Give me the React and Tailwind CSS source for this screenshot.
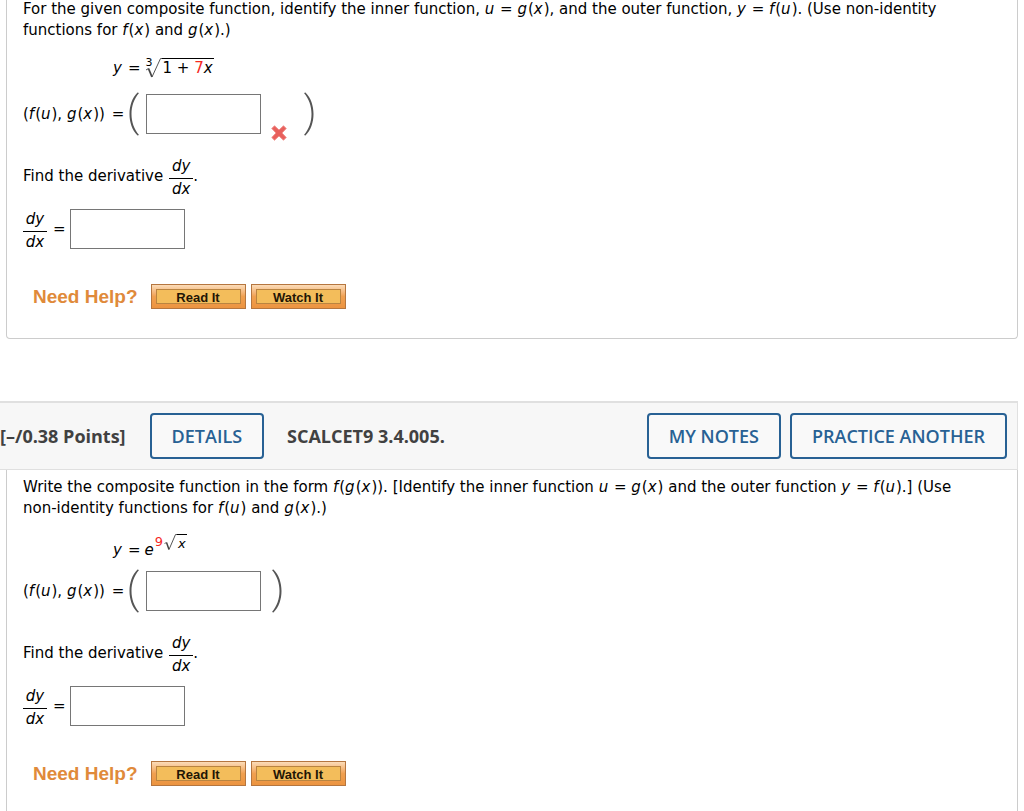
import React from "react";

const INPUT = "h-10 w-[115px] shrink-0 border border-[#767676] bg-white px-2 outline-none";

function Fraction() {
  return (
    <span className="flex w-6 shrink-0 flex-col items-center italic">
      <span className="leading-[21px]">dy</span>
      <span className="mt-px h-px w-full bg-black" />
      <span className="leading-[21px]">dx</span>
    </span>
  );
}

function Paren({ right }) {
  return (
    <svg viewBox="0 0 12 44" className="h-11 w-3 shrink-0" fill="none" aria-hidden="true">
      <path
        d={right ? "M1 1C6 7 8.500 14 8.500 22S6 37 1 43L2.500 43.500C8 38 10.500 30 10.500 22S8 6 2.500 0.500Z" : "M11 1C6 7 3.500 14 3.500 22S6 37 11 43L9.500 43.500C4 38 1.500 30 1.500 22S4 6 9.500 0.500Z"}
        fill="#555"
      />
    </svg>
  );
}

function WrongMark() {
  return (
    <svg viewBox="0 0 16 16" className="mt-[38px] h-4 w-4 shrink-0" role="img" aria-label="Incorrect">
      <path
        d="M3.500 0.800 8 5 12.500 0.800 15.200 3.500 11 8 15.200 12.500 12.500 15.200 8 11 3.500 15.200 0.800 12.500 5 8 0.800 3.500Z"
        fill="#e8605c"
        stroke="#f0908c"
        strokeWidth="1"
        strokeLinejoin="round"
      />
    </svg>
  );
}

function HelpButton({ children }) {
  return (
    <button
      type="button"
      className="h-[25px] w-[95px] border border-[#b5763f] bg-linear-to-b from-[#fbdcb8] via-[#f0a050] to-[#ec9440] p-1 font-['Liberation_Sans',Arial,sans-serif] text-[13px] font-bold text-[#1f1606]"
    >
      <span className="flex h-full items-center justify-center border border-[#b98440] bg-[#f3bd5b] pt-px leading-[15px]">
        {children}
      </span>
    </button>
  );
}

function Answers({ id, wrong }) {
  return (
    <>
      <div className="mt-2 flex h-11 items-center">
        <label htmlFor={id + "-pair"} className="mr-1 whitespace-nowrap">
          (<i>f</i>(<i>u</i>), <i>g</i>(<i>x</i>)) <span className="ml-0.5">=</span>
        </label>
        <Paren />
        <input id={id + "-pair"} type="text" className={INPUT + " ml-1.5"} />
        <span className="ml-2.5 flex h-11 items-center">
          {wrong && (
            <span className="mr-4 flex">
              <WrongMark />
            </span>
          )}
          <Paren right />
        </span>
      </div>
      <div className="mt-5 flex items-center">
        <span className="mr-1.5 pb-1">Find the derivative</span>
        <Fraction />
        <span className="pb-1">.</span>
      </div>
      <div className="mt-[9px] flex items-center">
        <label htmlFor={id + "-derivative"} className="mr-1 flex items-center gap-1.5">
          <Fraction />
          <span className="pb-1">=</span>
        </label>
        <input id={id + "-derivative"} type="text" className={INPUT + " mb-1"} />
      </div>
      <div className="mt-[31px] flex items-center pl-2.5">
        <strong className="mr-[13px] font-['Liberation_Sans',Arial,sans-serif] text-[19px] leading-6 text-[#e08a3a]">
          Need Help?
        </strong>
        <div className="flex gap-[5px]">
          <HelpButton>Read It</HelpButton>
          <HelpButton>Watch It</HelpButton>
        </div>
      </div>
    </>
  );
}

function HeaderButton({ children }) {
  return (
    <button
      type="button"
      className="h-[46px] rounded-[4px] border-2 border-[#286194] bg-[#f9f9f9] px-5 text-[18px] font-semibold whitespace-nowrap text-[#286194]"
    >
      {children}
    </button>
  );
}

export default function App() {
  return (
    <main className="overflow-hidden bg-white font-['DejaVu_Sans',Verdana,sans-serif] text-[15px] leading-[21px] text-black [&_i]:mr-px">
      <section className="mr-1.5 ml-1.5 rounded-b-[4px] border border-t-0 border-[#ccc] px-4 pb-[29px]">
        <p className="-mt-px">
          For the given composite function, identify the inner function, <i>u</i> = <i>g</i>(<i>x</i>), and the outer
          function, <i>y</i> = <i>f</i>(<i>u</i>). (Use non-identity functions for <i>f</i>(<i>x</i>) and <i>g</i>(
          <i>x</i>).)
        </p>
        <div className="mt-[11px] flex h-8 items-center pl-[90px]">
          <i>y</i>
          <span className="mx-[5px]">=</span>
          <span className="relative flex items-center">
            <sup className="absolute top-0 left-0 text-[11px] leading-[11px]">3</sup>
            <svg viewBox="0 0 17 22" className="h-[22px] w-[17px]" fill="none" aria-hidden="true">
              <path d="M1 13 3.500 11.500" stroke="#555" />
              <path d="M3.500 11.500 7 20" stroke="#444" strokeWidth="1.800" />
              <path d="M7 20 15.500 1.500H17" stroke="#555" />
            </svg>
            <span className="border-t border-black leading-[19px]">
              1 + <span className="text-[#f5291f]">7</span>
              <i>x</i>
            </span>
          </span>
        </div>
        <Answers id="root" wrong />
      </section>

      <section className="mt-[62px] mr-1.5">
        <header className="flex h-[69px] items-center border-t-2 border-r border-b border-[#e0e0e0] bg-[#f7f7f7] pr-2.5 font-['Open_Sans','Noto_Sans',sans-serif] text-[18px] font-bold text-[#414141]">
          <span className="mr-6 whitespace-nowrap">[–/0.38 Points]</span>
          <HeaderButton>DETAILS</HeaderButton>
          <h2 className="ml-[23px] whitespace-nowrap">SCALCET9 3.4.005.</h2>
          <div className="ml-auto flex gap-[9px]">
            <HeaderButton>MY NOTES</HeaderButton>
            <HeaderButton>PRACTICE ANOTHER</HeaderButton>
          </div>
        </header>
        <div className="ml-1.5 border-x border-[#ccc] px-4 pt-[7px] pb-7">
          <p>
            Write the composite function in the form <i>f</i>(<i>g</i>(<i>x</i>)). [Identify the inner function{" "}
            <i>u</i> = <i>g</i>(<i>x</i>) and the outer function <i>y</i> = <i>f</i>(<i>u</i>).] (Use{" "}
            <span className="whitespace-nowrap">non-identity</span> functions for <i>f</i>(<i>u</i>) and <i>g</i>(
            <i>x</i>).)
          </p>
          <div className="mt-2.5 flex h-8 items-end pl-[90px]">
            <i>y</i>
            <span className="mr-1 ml-[5px]">=</span>
            <i>e</i>
            <sup className="top-0 mb-2 flex text-[13px] leading-[18px]">
              <span className="text-[#f5291f]">9</span>
              <svg viewBox="0 0 14 18" className="h-[18px] w-3.5" fill="none" aria-hidden="true">
                <path d="M1.500 10.500 3.500 9.500" stroke="#666" />
                <path d="M3.500 9.500 6 16.500" stroke="#444" strokeWidth="1.500" />
                <path d="M6 16.500 12.500 1.500H14" stroke="#555" />
              </svg>
              <i className="mt-px border-t border-black px-px">x</i>
            </sup>
          </div>
          <Answers id="exponential" />
        </div>
      </section>
    </main>
  );
}
